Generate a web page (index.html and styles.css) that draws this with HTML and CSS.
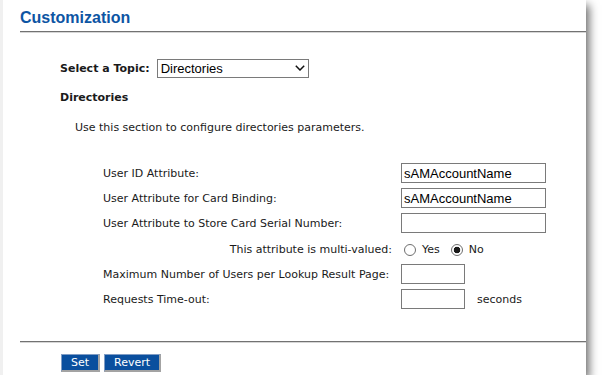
FILE: index.html
```html
<!DOCTYPE html>
<html lang="en">
<head>
    <meta charset="UTF-8">
    <meta name="viewport" content="width=device-width, initial-scale=1.0">
    <title>Customization</title>
    <link rel="stylesheet" href="styles.css">
</head>
<body>
    <div class="panel">
        <h1 class="title">Customization</h1>
        <div class="rule"></div>

        <div class="content">
            <!-- Topic selector -->
            <div class="topic-row">
                <label class="topic-label" for="topic">Select a Topic:</label>
                <span class="select-wrap">
                    <select id="topic" class="topic-select">
                        <option selected>Directories</option>
                        <option>Server</option>
                        <option>Security</option>
                    </select>
                    <svg class="chevron" width="10" height="6" viewBox="0 0 10 6">
                        <polyline points="0.8,0.8 5,5 9.2,0.8" fill="none" stroke="#111" stroke-width="1.5"/>
                    </svg>
                </span>
            </div>

            <h2 class="section-title">Directories</h2>
            <p class="section-desc">Use this section to configure directories parameters.</p>

            <!-- Directory parameters -->
            <div class="fields">
                <div class="field">
                    <label class="field-label" for="userId">User ID Attribute:</label>
                    <input type="text" id="userId" class="text-input" value="sAMAccountName">
                </div>
                <div class="field">
                    <label class="field-label" for="cardBinding">User Attribute for Card Binding:</label>
                    <input type="text" id="cardBinding" class="text-input" value="sAMAccountName">
                </div>
                <div class="field">
                    <label class="field-label" for="serial">User Attribute to Store Card Serial Number:</label>
                    <input type="text" id="serial" class="text-input">
                </div>
                <div class="field field-radio">
                    <span class="field-label field-label-right">This attribute is multi-valued:</span>
                    <label class="radio"><input type="radio" name="multi"> Yes</label>
                    <label class="radio"><input type="radio" name="multi" checked> No</label>
                </div>
                <div class="field">
                    <label class="field-label" for="maxUsers">Maximum Number of Users per Lookup Result Page:</label>
                    <input type="text" id="maxUsers" class="text-input text-input-small">
                </div>
                <div class="field">
                    <label class="field-label" for="timeout">Requests Time-out:</label>
                    <input type="text" id="timeout" class="text-input text-input-small">
                    <span class="unit">seconds</span>
                </div>
            </div>
        </div>

        <div class="rule rule-bottom"></div>

        <div class="actions">
            <button class="btn">Set</button>
            <button class="btn">Revert</button>
        </div>
    </div>
</body>
</html>
```

FILE: styles.css
```css
body {
    margin: 0;
    padding: 0;
    background-color: #ffffff;
    font-family: Verdana, "DejaVu Sans", sans-serif;
    font-size: 11px;
    color: #1a1a1a;
}

.panel {
    width: 566px;
    height: 375px;
    padding-left: 17px;
    background-color: #ffffff;
    border-left: 3px solid #f0f0f0;
    box-shadow: 3px 5px 9px rgba(0, 0, 0, 0.6);
}

.title {
    margin: 0;
    padding-top: 8px;
    margin-bottom: 4px;
    font-family: Arial, "Liberation Sans", sans-serif;
    font-size: 16px;
    line-height: 19px;
    font-weight: bold;
    color: #0d55a3;
}

.rule {
    height: 0;
    border-top: 1px solid #727272;
    border-bottom: 1px solid #d6d6d6;
}

.rule-bottom {
    margin-top: 32px;
}

.content {
    padding-left: 40px;
}

.topic-row {
    display: flex;
    align-items: center;
    gap: 7px;
    margin-top: 26px;
    height: 19px;
}

.topic-label {
    font-weight: bold;
}

.select-wrap {
    position: relative;
    display: inline-block;
}

.topic-select {
    appearance: none;
    -webkit-appearance: none;
    width: 152px;
    height: 19px;
    margin: 0;
    padding: 0 0 0 3px;
    border: 1px solid #7a7a7a;
    border-radius: 0;
    background-color: #ffffff;
    font-family: Arial, "Liberation Sans", sans-serif;
    font-size: 13px;
    color: #000;
}

.chevron {
    position: absolute;
    right: 4px;
    top: 6px;
    pointer-events: none;
}

.section-title {
    margin: 13px 0 0 0;
    font-size: 11px;
    line-height: 14px;
    font-weight: bold;
}

.section-desc {
    margin: 16px 0 0 0;
    padding-left: 15px;
    line-height: 14px;
}

.fields {
    margin-top: 28px;
    padding-left: 43px;
    display: flex;
    flex-direction: column;
    gap: 5px;
}

.field {
    display: flex;
    align-items: center;
    height: 20px;
}

.field-radio {
    height: 19px;
    padding-top: 2px;
}

.field-label {
    width: 298px;
    flex-shrink: 0;
}

.field-label-right {
    width: 289px;
    padding-right: 9px;
    text-align: right;
}

.text-input {
    width: 145px;
    height: 20px;
    box-sizing: border-box;
    margin: 0;
    padding: 0 2px;
    border: 1px solid #7a7a7a;
    border-radius: 0;
    font-family: Arial, "Liberation Sans", sans-serif;
    font-size: 13px;
    color: #000;
}

.text-input-small {
    width: 64px;
}

.unit {
    margin-left: 12px;
}

.radio {
    display: flex;
    align-items: center;
    margin-right: 8px;
    font-size: 11px;
}

.radio input {
    appearance: none;
    -webkit-appearance: none;
    width: 12px;
    height: 12px;
    margin: 0 6px 0 3px;
    border: 1px solid #6e6e6e;
    border-radius: 50%;
    background-color: #ffffff;
}

.radio input:checked {
    background: radial-gradient(circle, #1a1a1a 0, #1a1a1a 3px, #ffffff 3.6px);
}

.actions {
    display: flex;
    gap: 4px;
    margin-top: 11px;
    padding-left: 41px;
}

.btn {
    height: 18px;
    margin: 0;
    padding: 0 9px;
    background-color: #0a4f9e;
    color: #ffffff;
    font-family: Verdana, "DejaVu Sans", sans-serif;
    font-size: 11px;
    line-height: 14px;
    border-top: 1px solid #7f9cc4;
    border-left: 1px solid #7f9cc4;
    border-right: 2px solid #a3a3a3;
    border-bottom: 2px solid #a3a3a3;
    border-radius: 0;
    cursor: pointer;
}

.btn:hover {
    background-color: #083f80;
}
```
